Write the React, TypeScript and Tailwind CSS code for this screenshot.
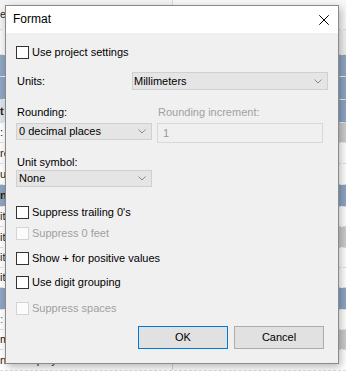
import React from "react";

type Row = { h: string; left: string; right: string; text: string; bold?: boolean; color?: string; rtext?: string };

const rows: Row[] = [
  { h: "h-[30px]", left: "bg-[#f3f3f3]", right: "bg-[#f7f7f7]", text: "er" },
  { h: "h-[25px]", left: "bg-[#f7f7f7]", right: "bg-[#f0f0f0]", text: "" },
  { h: "h-[22px]", left: "bg-[#8da5c4]", right: "bg-[#8da5c4]", text: "" },
  { h: "h-[23px]", left: "bg-[#8da5c4]", right: "bg-[#8da5c4]", text: "" },
  { h: "h-[23px]", left: "bg-[#dfe5ee]", right: "bg-[#8da5c4]", text: "t", bold: true },
  { h: "h-[20px]", left: "bg-white", right: "bg-[#cccccc]", text: ":" },
  { h: "h-[21px]", left: "bg-white", right: "bg-white", text: "re" },
  { h: "h-[21px]", left: "bg-white", right: "bg-white", text: "u" },
  { h: "h-[22px]", left: "bg-[#8da5c4]", right: "bg-[#8da5c4]", text: "n", bold: true },
  { h: "h-[20px]", left: "bg-white", right: "bg-white", text: "it" },
  { h: "h-[21px]", left: "bg-white", right: "bg-[#cccccc]", text: "it" },
  { h: "h-[20px]", left: "bg-white", right: "bg-white", text: "it" },
  { h: "h-[20px]", left: "bg-white", right: "bg-white", text: "it" },
  { h: "h-[22px]", left: "bg-[#8da5c4]", right: "bg-[#8da5c4]", text: "" },
  { h: "h-[20px]", left: "bg-white", right: "bg-white", text: ":", color: "text-[#3a6ea5]" },
  { h: "h-[20px]", left: "bg-white", right: "bg-[#cccccc]", text: "m" },
  { h: "h-[21px]", left: "bg-white", right: "bg-white", text: "nes Display", rtext: "Hide and Line" },
];

function Chevron() {
  return (
    <svg width="8" height="5" viewBox="0 0 8 5" className="shrink-0">
      <path d="M0.5 0.5 L4 4 L7.5 0.5" fill="none" stroke="#8a8a8a" strokeWidth="1" />
    </svg>
  );
}

function Combo({ value, sizeClass }: { value: string; sizeClass: string }) {
  return (
    <div className={`flex items-center justify-between bg-[#e5e5e5] border border-[#d0d0d0] pl-[1px] pr-[5px] text-black ${sizeClass}`}>
      <span>{value}</span>
      <Chevron />
    </div>
  );
}

function Check({ label, disabled }: { label: string; disabled?: boolean }) {
  return (
    <div className="flex items-center h-[13px]">
      <div
        className={
          disabled
            ? "w-[13px] h-[13px] shrink-0 border border-[#d4d4d4] bg-[#fbfbfb]"
            : "w-[13px] h-[13px] shrink-0 border border-[#333333] bg-white"
        }
      />
      <span className={disabled ? "ml-[3px] text-[#a0a0a0]" : "ml-[3px] text-black"}>{label}</span>
    </div>
  );
}

export default function App() {
  return (
    <div className="relative w-[346px] h-[371px] overflow-hidden bg-white font-['Liberation_Sans',Arial,sans-serif] text-[11px] leading-[13px]">
      {/* background properties palette */}
      <div className="flex flex-col w-[346px]">
        {rows.map((r, i) => (
          <div
            key={i}
            className={`flex ${r.h} border-b border-dashed border-[#dcdcdc]`}
          >
            <div className={`w-[172px] flex items-center ${r.left} overflow-hidden whitespace-nowrap`}>
              <span className={`${r.bold ? "font-bold" : ""} ${r.color ?? "text-[#222222]"}`}>{r.text}</span>
            </div>
            <div className={`flex-1 flex items-center pl-[8px] border-l border-[#d8d8d8] ${r.right} whitespace-nowrap text-[#222222]`}>
              {r.rtext ?? ""}
            </div>
          </div>
        ))}
      </div>

      {/* dialog window */}
      <div className="absolute left-[5px] top-[5px] w-[334px] h-[359px] border border-[#8a8a8a] bg-[#f0f0f0] shadow-[2px_3px_8px_rgba(0,0,0,0.28)] flex flex-col">
        <div className="h-[27px] shrink-0 bg-white flex items-center justify-between pl-[7px] pr-[9px]">
          <span className="text-[12px] text-black">Format</span>
          <svg width="10" height="10" viewBox="0 0 10 10">
            <path d="M0.3 0.3 L9.7 9.7 M9.7 0.3 L0.3 9.7" stroke="#000" strokeWidth="1" fill="none" />
          </svg>
        </div>

        <div className="flex flex-col pl-[10px]">
          <div className="mt-[13px]">
            <Check label="Use project settings" />
          </div>

          <div className="mt-[13px] flex items-center h-[18px]">
            <div className="w-[116px] pl-[1px] text-black">Units:</div>
            <Combo value="Millimeters" sizeClass="w-[196px] h-[18px]" />
          </div>

          <div className="mt-[15px] flex items-center h-[14px]">
            <div className="w-[141px] pl-[1px] text-black">Rounding:</div>
            <div className="pl-[1px] text-[#a0a0a0]">Rounding increment:</div>
          </div>

          <div className="mt-[4px] flex items-start h-[20px]">
            <Combo value="0 decimal places" sizeClass="w-[136px] h-[17px] pl-[2px]" />
            <div className="ml-[5px] w-[166px] h-[20px] border border-[#d9d9d9] bg-[#f0f0f0] flex items-center pl-[5px] text-[#9a9a9a]">
              1
            </div>
          </div>

          <div className="mt-[12px] h-[14px] flex items-center pl-[1px] text-black">Unit symbol:</div>

          <div className="mt-[1px]">
            <Combo value="None" sizeClass="w-[136px] h-[17px] pl-[2px]" />
          </div>

          <div className="mt-[19px]">
            <Check label="Suppress trailing 0's" />
          </div>
          <div className="mt-[8px]">
            <Check label="Suppress 0 feet" disabled />
          </div>
          <div className="mt-[12px]">
            <Check label="Show + for positive values" />
          </div>
          <div className="mt-[11px]">
            <Check label="Use digit grouping" />
          </div>
          <div className="mt-[13px]">
            <Check label="Suppress spaces" disabled />
          </div>

          <div className="mt-[11px] flex pl-[122px] gap-[6px]">
            <div className="w-[90px] h-[23px] flex items-center justify-center bg-[#e1e1e1] border border-[#0078d7] text-black">
              OK
            </div>
            <div className="w-[90px] h-[23px] flex items-center justify-center bg-[#e1e1e1] border border-[#adadad] text-black">
              Cancel
            </div>
          </div>
        </div>
      </div>
    </div>
  );
}
